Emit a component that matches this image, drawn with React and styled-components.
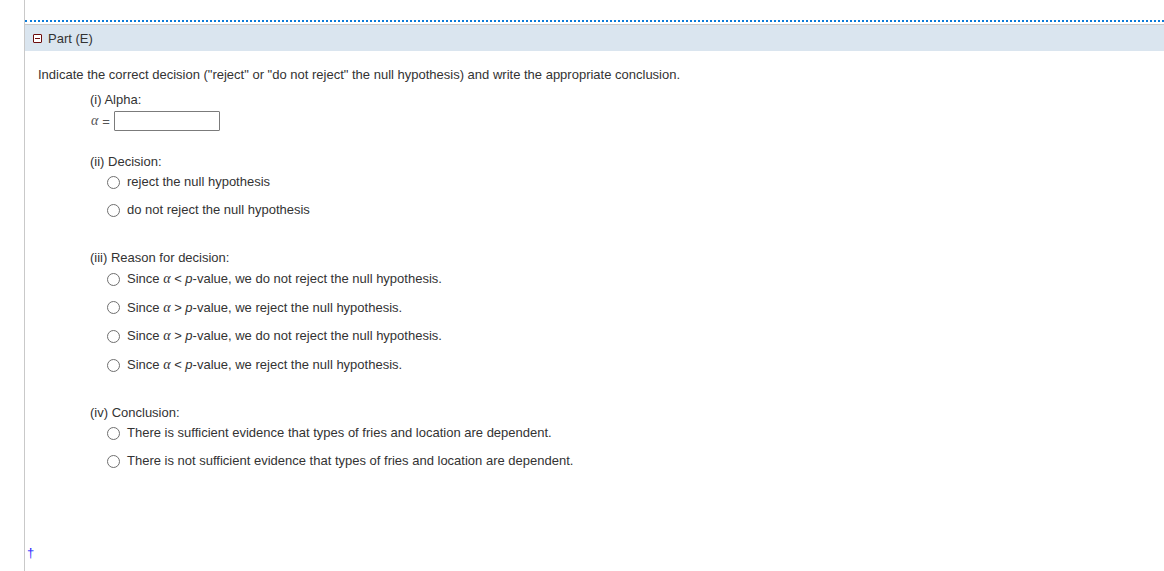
import React from 'react';
import styled, { createGlobalStyle } from 'styled-components';

const GlobalStyle = createGlobalStyle`
  html, body {
    margin: 0;
    padding: 0;
    background: #fff;
  }
  body {
    font-family: "Liberation Sans", Arial, sans-serif;
    font-size: 13px;
    color: #333;
  }
`;

const Page = styled.div`
  padding-left: 24px;
  height: 571px;
  box-sizing: border-box;
  overflow: hidden;
`;

const Frame = styled.div`
  border-left: 1px solid #c9c9c9;
  height: 100%;
  padding-top: 20px;
  box-sizing: border-box;
  display: flex;
  flex-direction: column;
`;

const Separator = styled.div`
  border-top: 2px dotted #0b7bd9;
  height: 2px;
`;

const PartHeader = styled.div`
  border-top: 1px solid #c8c8c8;
  background: #dae5ef;
  height: 26px;
  display: flex;
  align-items: center;
  gap: 6px;
  padding-left: 8px;
  color: #333;
`;

const Collapse = styled.span`
  width: 7px;
  height: 7px;
  border: 1px solid #6e0c0c;
  border-radius: 1px;
  display: flex;
  align-items: center;
  justify-content: center;
  background: #fff;

  &::after {
    content: '';
    width: 5px;
    height: 1px;
    background: #6e0c0c;
  }
`;

const Body = styled.div`
  padding-left: 13px;
  flex: 1;
`;

const Prompt = styled.p`
  margin: 16px 0 0;
  line-height: 16px;
`;

const Group = styled.div`
  margin-left: 52px;
  margin-top: ${p => p.$top}px;
`;

const Label = styled.div`
  line-height: 16px;
`;

const AlphaRow = styled.div`
  display: flex;
  align-items: center;
  gap: 4px;
  height: 20px;
  margin-top: 3px;
`;

const Greek = styled.i`
  font-family: "Liberation Serif", "Times New Roman", serif;
  font-size: 14px;
`;

const Sym = styled.span`
  display: inline-flex;
  align-items: center;
  gap: 4px;
  color: #555;
  padding-left: 1px;
`;

const AnswerBox = styled.input`
  width: 106px;
  height: 20px;
  box-sizing: border-box;
  border: 1px solid #7b7b7b;
  border-radius: 1px;
  padding: 0 3px;
  margin: 0;
  font: inherit;
`;

const Options = styled.div`
  display: flex;
  flex-direction: column;
  gap: ${p => p.$gap}px;
  margin-top: ${p => p.$top}px;
  padding-left: 17px;
`;

const Option = styled.label`
  display: flex;
  align-items: center;
  gap: 7px;
  height: 20px;
  line-height: 16px;
`;

const Radio = styled.span`
  width: 11px;
  height: 11px;
  border: 1px solid #6f6f6f;
  border-radius: 50%;
  background: #fff;
  flex: none;
`;

const Dagger = styled.div`
  color: #2b2bff;
  padding-left: 2px;
  line-height: 16px;
  margin-bottom: 10px;
`;

const Alpha = () => <Greek>α</Greek>;
const P = () => <i>p</i>;

const decisions = ['reject the null hypothesis', 'do not reject the null hypothesis'];

const reasons = [
  ['<', 'we do not reject the null hypothesis.'],
  ['>', 'we reject the null hypothesis.'],
  ['>', 'we do not reject the null hypothesis.'],
  ['<', 'we reject the null hypothesis.'],
];

const conclusions = [
  'There is sufficient evidence that types of fries and location are dependent.',
  'There is not sufficient evidence that types of fries and location are dependent.',
];

export default function App() {
  return (
    <Page>
      <GlobalStyle />
      <Frame>
        <Separator />
        <PartHeader>
          <Collapse />
          Part (E)
        </PartHeader>
        <Body>
          <Prompt>
            Indicate the correct decision ("reject" or "do not reject" the null hypothesis) and write the appropriate conclusion.
          </Prompt>

          <Group $top={9}>
            <Label>(i) Alpha:</Label>
            <AlphaRow>
              <Sym>
                <Alpha /> =
              </Sym>
              <AnswerBox type="text" />
            </AlphaRow>
          </Group>

          <Group $top={23}>
            <Label>(ii) Decision:</Label>
            <Options $gap={8} $top={2}>
              {decisions.map(d => (
                <Option key={d}>
                  <Radio />
                  {d}
                </Option>
              ))}
            </Options>
          </Group>

          <Group $top={30}>
            <Label>(iii) Reason for decision:</Label>
            <Options $gap={8.7} $top={3}>
              {reasons.map(([op, rest], i) => (
                <Option key={i}>
                  <Radio />
                  <span>
                    Since <Alpha /> {op} <P />-value, {rest}
                  </span>
                </Option>
              ))}
            </Options>
          </Group>

          <Group $top={30}>
            <Label>(iv) Conclusion:</Label>
            <Options $gap={8} $top={2}>
              {conclusions.map(c => (
                <Option key={c}>
                  <Radio />
                  {c}
                </Option>
              ))}
            </Options>
          </Group>
        </Body>
        <Dagger>†</Dagger>
      </Frame>
    </Page>
  );
}
